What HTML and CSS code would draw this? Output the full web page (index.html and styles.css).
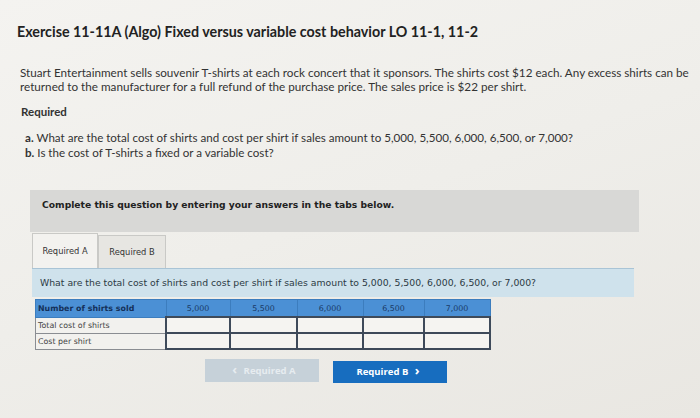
FILE: index.html
```html
<!DOCTYPE html>
<html>
<head>
<meta charset="utf-8">
<link rel="stylesheet" href="styles.css">
</head>
<body>
<div class="page">
  <h1 class="title">Exercise 11-11A (Algo) Fixed versus variable cost behavior LO 11-1, 11-2</h1>
  <p class="intro">Stuart Entertainment sells souvenir T-shirts at each rock concert that it sponsors. The shirts cost $12 each. Any excess shirts can be returned to the manufacturer for a full refund of the purchase price. The sales price is $22 per shirt.</p>
  <h2 class="req">Required</h2>
  <ol class="questions">
    <li><b>a.</b> What are the total cost of shirts and cost per shirt if sales amount to 5,000, 5,500, 6,000, 6,500, or 7,000?</li>
    <li><b>b.</b> Is the cost of T-shirts a fixed or a variable cost?</li>
  </ol>
  <div class="notice">Complete this question by entering your answers in the tabs below.</div>
  <div class="tabs">
    <div class="tab active">Required A</div>
    <div class="tab other">Required B</div>
  </div>
  <div class="prompt">What are the total cost of shirts and cost per shirt if sales amount to 5,000, 5,500, 6,000, 6,500, or 7,000?</div>
  <table class="grid">
    <tr class="head">
      <td class="label">Number of shirts sold</td>
      <td>5,000</td><td>5,500</td><td>6,000</td><td>6,500</td><td>7,000</td>
    </tr>
    <tr>
      <td class="label">Total cost of shirts</td>
      <td class="in"></td><td class="in"></td><td class="in"></td><td class="in"></td><td class="in"></td>
    </tr>
    <tr>
      <td class="label">Cost per shirt</td>
      <td class="in"></td><td class="in"></td><td class="in"></td><td class="in"></td><td class="in"></td>
    </tr>
  </table>
  <div class="nav">
    <div class="btn prev"><span class="chev">&lsaquo;</span> Required A</div>
    <div class="btn next">Required B <span class="chev">&rsaquo;</span></div>
  </div>
</div>
</body>
</html>
```
FILE: styles.css
```css
html, body {
  margin: 0;
  padding: 0;
}
body {
  width: 700px;
  height: 418px;
  overflow: hidden;
  background: linear-gradient(160deg, #f4f3f0 0%, #efeeea 50%, #e9e7e2 100%);
  font-family: Lato, "Open Sans", sans-serif;
  color: #2b2b2b;
}
.page {
  padding: 23px 0 0 17px;
}
.title {
  margin: 0;
  font-size: 14.3px;
  line-height: 18px;
  font-weight: 700;
  color: #222;
}
.intro {
  margin: 24px 8px 0 3px;
  font-size: 11.7px;
  line-height: 14px;
  color: #333;
}
.req {
  margin: 12px 0 0 4px;
  font-size: 11.5px;
  line-height: 14px;
  font-weight: 700;
  color: #333;
}
.questions {
  list-style: none;
  margin: 12px 0 0 8px;
  padding: 0;
  font-size: 11.6px;
  line-height: 14.5px;
  color: #333;
}
.questions b {
  font-weight: 700;
}
.notice {
  margin: 30px 0 0 13px;
  width: 609px;
  height: 42px;
  box-sizing: border-box;
  padding: 9px 0 0 12px;
  background: #d8d8d6;
  font-family: "DejaVu Sans", Verdana, sans-serif;
  font-size: 9.2px;
  font-weight: 700;
  color: #222;
}
.tabs {
  display: flex;
  align-items: flex-start;
  margin: 1px 0 0 15px;
  height: 35px;
}
.tab {
  box-sizing: border-box;
  border: 1px solid #c9c9c6;
  border-bottom: none;
  text-align: center;
  font-family: "DejaVu Sans", Verdana, sans-serif;
  font-size: 8.3px;
  color: #333;
}
.tab.active {
  width: 66px;
  height: 35px;
  padding-top: 12px;
  background: #f3f2ef;
}
.tab.other {
  width: 68px;
  height: 33px;
  margin-top: 2px;
  padding-top: 11px;
  background: #e7e6e2;
}
.prompt {
  margin: 0 0 0 15px;
  width: 602px;
  height: 29px;
  box-sizing: border-box;
  padding: 8px 0 0 8px;
  background: #cfe2ec;
  border-top: 1px solid #a9c4d6;
  font-family: "DejaVu Sans", Verdana, sans-serif;
  font-size: 9.3px;
  color: #2c3a44;
}
.grid {
  margin: 2px 0 0 18px;
  border-collapse: collapse;
  table-layout: fixed;
  font-family: "DejaVu Sans", Verdana, sans-serif;
  font-size: 7.9px;
}
.grid td {
  border: 1px solid #8a8d92;
  padding: 0;
  text-align: center;
}
.grid td:nth-child(1) { width: 127px; }
.grid td:nth-child(2) { width: 62px; }
.grid td:nth-child(3) { width: 65px; }
.grid td:nth-child(4) { width: 64px; }
.grid td:nth-child(5) { width: 59px; }
.grid td:nth-child(6) { width: 64px; }
.grid td.label {
  text-align: left;
  padding-left: 2px;
  color: #444;
  background: #f2f1ee;
}
.grid tr.head td {
  height: 16px;
  background: #4b90d5;
  color: #1a3a66;
  border-color: #3c7dbe;
}
.grid tr.head td.label {
  background: #4b90d5;
  color: #14305a;
  font-weight: 700;
}
.grid tr:not(.head) td {
  height: 14px;
}
.grid td.in {
  background: #f5f4f1;
  border: 2px solid #3e4a5a;
}
.nav {
  display: flex;
  align-items: flex-start;
  gap: 14px;
  margin: 9px 0 0 188px;
}
.btn {
  width: 114px;
  height: 23px;
  line-height: 23px;
  text-align: center;
  font-family: "Open Sans", sans-serif;
  font-size: 9.5px;
  font-weight: 700;
}
.chev {
  font-size: 13px;
  line-height: 0;
  margin: 0 4px;
}
.btn.prev {
  background: #c6d1d9;
  color: #e6ecf0;
}
.btn.next {
  height: 22px;
  line-height: 21px;
  background: #176dbf;
  color: #fff;
  margin-top: 2px;
}
```
